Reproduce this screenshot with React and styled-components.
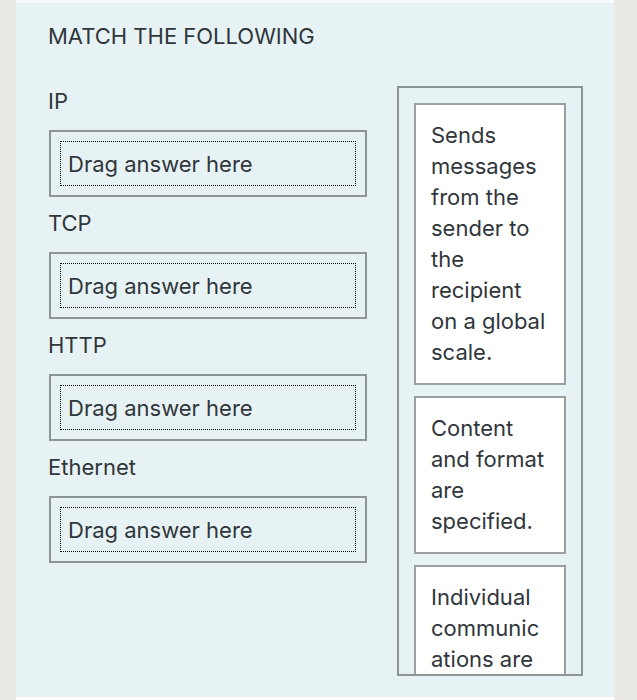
import React from 'react'
import styled, { createGlobalStyle } from 'styled-components'

const GlobalStyle = createGlobalStyle`
  html, body {
    margin: 0;
    padding: 0;
    background: #ebe9e6;
  }
  body {
    font-family: Inter, 'Liberation Sans', sans-serif;
    color: #30363a;
  }
`

const Page = styled.div`
  height: 700px;
  overflow: hidden;
  padding: 0 23px 0 16px;
`

const Panel = styled.div`
  box-sizing: border-box;
  height: 700px;
  background: #e6f2f4;
  border-top: 3px solid #f7fafb;
  border-bottom: 3px solid #ffffff;
  padding: 18px 0 0 32px;
`

const Title = styled.div`
  font-size: 22px;
  line-height: 30px;
  margin-bottom: 35px;
`

const Columns = styled.div`
  display: flex;
  align-items: flex-start;
  gap: 30px;
`

const Questions = styled.div`
  width: 318px;
  margin-left: 1px;
`

const Item = styled.div`
  margin-bottom: 11px;
`

const Label = styled.div`
  font-size: 22px;
  line-height: 30px;
  margin: 0 0 14px -1px;
`

const DropZone = styled.div`
  box-sizing: border-box;
  height: 67px;
  border: 2px solid #8e9598;
  padding: 9px;
`

const DropTarget = styled.div`
  box-sizing: border-box;
  height: 45px;
  border: 1px dotted #000;
  display: flex;
  align-items: center;
  padding: 0 7px;
  font-size: 22px;
`

const Answers = styled.div`
  box-sizing: border-box;
  width: 186px;
  height: 590px;
  border: 2px solid #8e9598;
  padding: 15px;
  overflow: hidden;
  display: flex;
  flex-direction: column;
  gap: 11px;
`

const Card = styled.div`
  flex-shrink: 0;
  min-height: ${p => p.$minHeight || 0}px;
  background: #ffffff;
  border: 2px solid #9a9fa2;
  padding: 15px;
  font-size: 22px;
  line-height: 31px;
  overflow-wrap: break-word;
`

const questions = ['IP', 'TCP', 'HTTP', 'Ethernet']

const answers = [
  { text: 'Sends messages from the sender to the recipient on a global scale.' },
  { text: 'Content and format are specified.' },
  { text: 'Individual communications are', minHeight: 160 },
]

export default function App() {
  return (
    <Page>
      <GlobalStyle />
      <Panel>
        <Title>MATCH THE FOLLOWING</Title>
        <Columns>
          <Questions>
            {questions.map(q => (
              <Item key={q}>
                <Label>{q}</Label>
                <DropZone>
                  <DropTarget>Drag answer here</DropTarget>
                </DropZone>
              </Item>
            ))}
          </Questions>
          <Answers>
            {answers.map(a => (
              <Card key={a.text} $minHeight={a.minHeight}>
                {a.text}
              </Card>
            ))}
          </Answers>
        </Columns>
      </Panel>
    </Page>
  )
}
